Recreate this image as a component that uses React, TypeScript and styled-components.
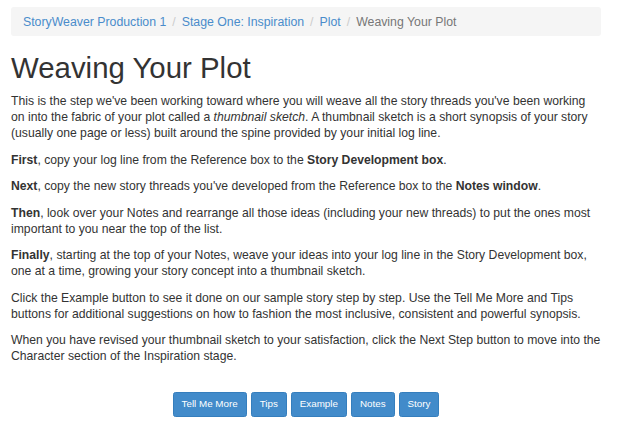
import React from "react";
import styled, { createGlobalStyle } from "styled-components";

const Global = createGlobalStyle`
  html, body { margin: 0; padding: 0; background: #fff; }
  body {
    font-family: "Liberation Sans", Arial, Helvetica, sans-serif;
    font-size: 12.2px;
    line-height: 16px;
    color: #333;
  }
`;

const Page = styled.div`
  width: 590px;
  margin-left: 11px;
  padding-top: 7px;
`;

const Breadcrumb = styled.ol`
  list-style: none;
  margin: 0 0 16px;
  padding: 6.5px 12px;
  background: #f5f5f5;
  border-radius: 3px;
  display: flex;
  align-items: center;
  font-size: 12.3px;
  & > li + li::before {
    content: "/";
    color: #ccc;
    padding: 0 6px;
  }
`;

const Crumb = styled.li<{ $active?: boolean }>`
  color: ${(p) => (p.$active ? "#777" : "#4a8ccb")};
`;

const Title = styled.h1`
  font-size: 29.4px;
  font-weight: 500;
  line-height: 1.1;
  margin: 16px 0 9px;
  color: #333;
`;

const Para = styled.p`
  margin: 0 0 10.5px;
`;

const ButtonRow = styled.div`
  display: flex;
  justify-content: center;
  gap: 4px;
  margin-top: 28px;
`;

const Button = styled.button`
  font-family: "Liberation Sans", Arial, Helvetica, sans-serif;
  font-size: 9.8px;
  line-height: 14.4px;
  padding: 4px 8px;
  color: #fff;
  background: #428bca;
  border: 1px solid #357ebd;
  border-radius: 2.5px;
  cursor: pointer;
`;

export default function App() {
  return (
    <>
      <Global />
      <Page>
        <Breadcrumb>
          <Crumb>StoryWeaver Production 1</Crumb>
          <Crumb>Stage One: Inspiration</Crumb>
          <Crumb>Plot</Crumb>
          <Crumb $active>Weaving Your Plot</Crumb>
        </Breadcrumb>
        <Title>Weaving Your Plot</Title>
        <Para>
          This is the step we've been working toward where you will weave all the story threads you've been working
          on into the fabric of your plot called a <em>thumbnail sketch</em>. A thumbnail sketch is a short synopsis of
          your story (usually one page or less) built around the spine provided by your initial log line.
        </Para>
        <Para>
          <b>First</b>, copy your log line from the Reference box to the <b>Story Development box</b>.
        </Para>
        <Para>
          <b>Next</b>, copy the new story threads you've developed from the Reference box to the <b>Notes window</b>.
        </Para>
        <Para>
          <b>Then</b>, look over your Notes and rearrange all those ideas (including your new threads) to put the ones
          most important to you near the top of the list.
        </Para>
        <Para>
          <b>Finally</b>, starting at the top of your Notes, weave your ideas into your log line in the Story
          Development box, one at a time, growing your story concept into a thumbnail sketch.
        </Para>
        <Para>
          Click the Example button to see it done on our sample story step by step. Use the Tell Me More and Tips
          buttons for additional suggestions on how to fashion the most inclusive, consistent and powerful synopsis.
        </Para>
        <Para>
          When you have revised your thumbnail sketch to your satisfaction, click the Next Step button to move into
          the Character section of the Inspiration stage.
        </Para>
        <ButtonRow>
          <Button>Tell Me More</Button>
          <Button>Tips</Button>
          <Button>Example</Button>
          <Button>Notes</Button>
          <Button>Story</Button>
        </ButtonRow>
      </Page>
    </>
  );
}
